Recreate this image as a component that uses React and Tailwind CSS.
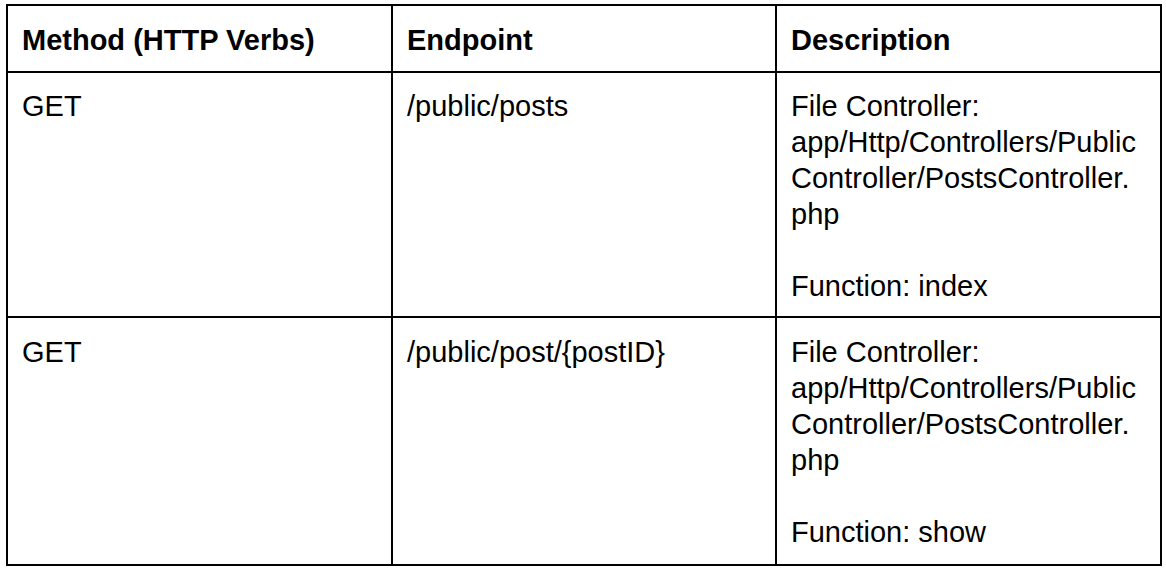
const rows = [
  { method: 'GET', endpoint: '/public/posts', fn: 'index', pad: 'pt-[15px] pb-[12px]' },
  { method: 'GET', endpoint: '/public/post/{postID}', fn: 'show', pad: 'pt-[16px] pb-[14px]' },
];

function Cell({ children, pad = 'pt-[16px] pb-[13px]', head = false }) {
  return (
    <td
      className={`border-2 border-black align-top pl-[14px] pr-[8px] ${pad} ${
        head ? 'font-bold' : ''
      }`}
    >
      {children}
    </td>
  );
}

export default function App() {
  return (
    <div className="min-h-[570px] bg-white pl-[6px] pt-[4px] text-black text-[29px] leading-[36px] font-['Liberation_Sans',Arial,sans-serif]">
      <table className="border-collapse table-fixed w-[1154px]">
        <colgroup>
          <col className="w-[385px]" />
          <col className="w-[384px]" />
          <col className="w-[385px]" />
        </colgroup>
        <thead>
          <tr>
            <Cell head>Method (HTTP Verbs)</Cell>
            <Cell head>Endpoint</Cell>
            <Cell head>Description</Cell>
          </tr>
        </thead>
        <tbody>
          {rows.map((r) => (
            <tr key={r.endpoint}>
              <Cell pad={r.pad}>{r.method}</Cell>
              <Cell pad={r.pad}>{r.endpoint}</Cell>
              <Cell pad={r.pad}>
                <span className="block whitespace-nowrap">File Controller:</span>
                <span className="block whitespace-nowrap">app/Http/Controllers/Public</span>
                <span className="block whitespace-nowrap">Controller/PostsController.</span>
                <span className="block whitespace-nowrap">php</span>
                <span className="block h-[36px]" />
                <span className="block whitespace-nowrap">Function: {r.fn}</span>
              </Cell>
            </tr>
          ))}
        </tbody>
      </table>
    </div>
  );
}
